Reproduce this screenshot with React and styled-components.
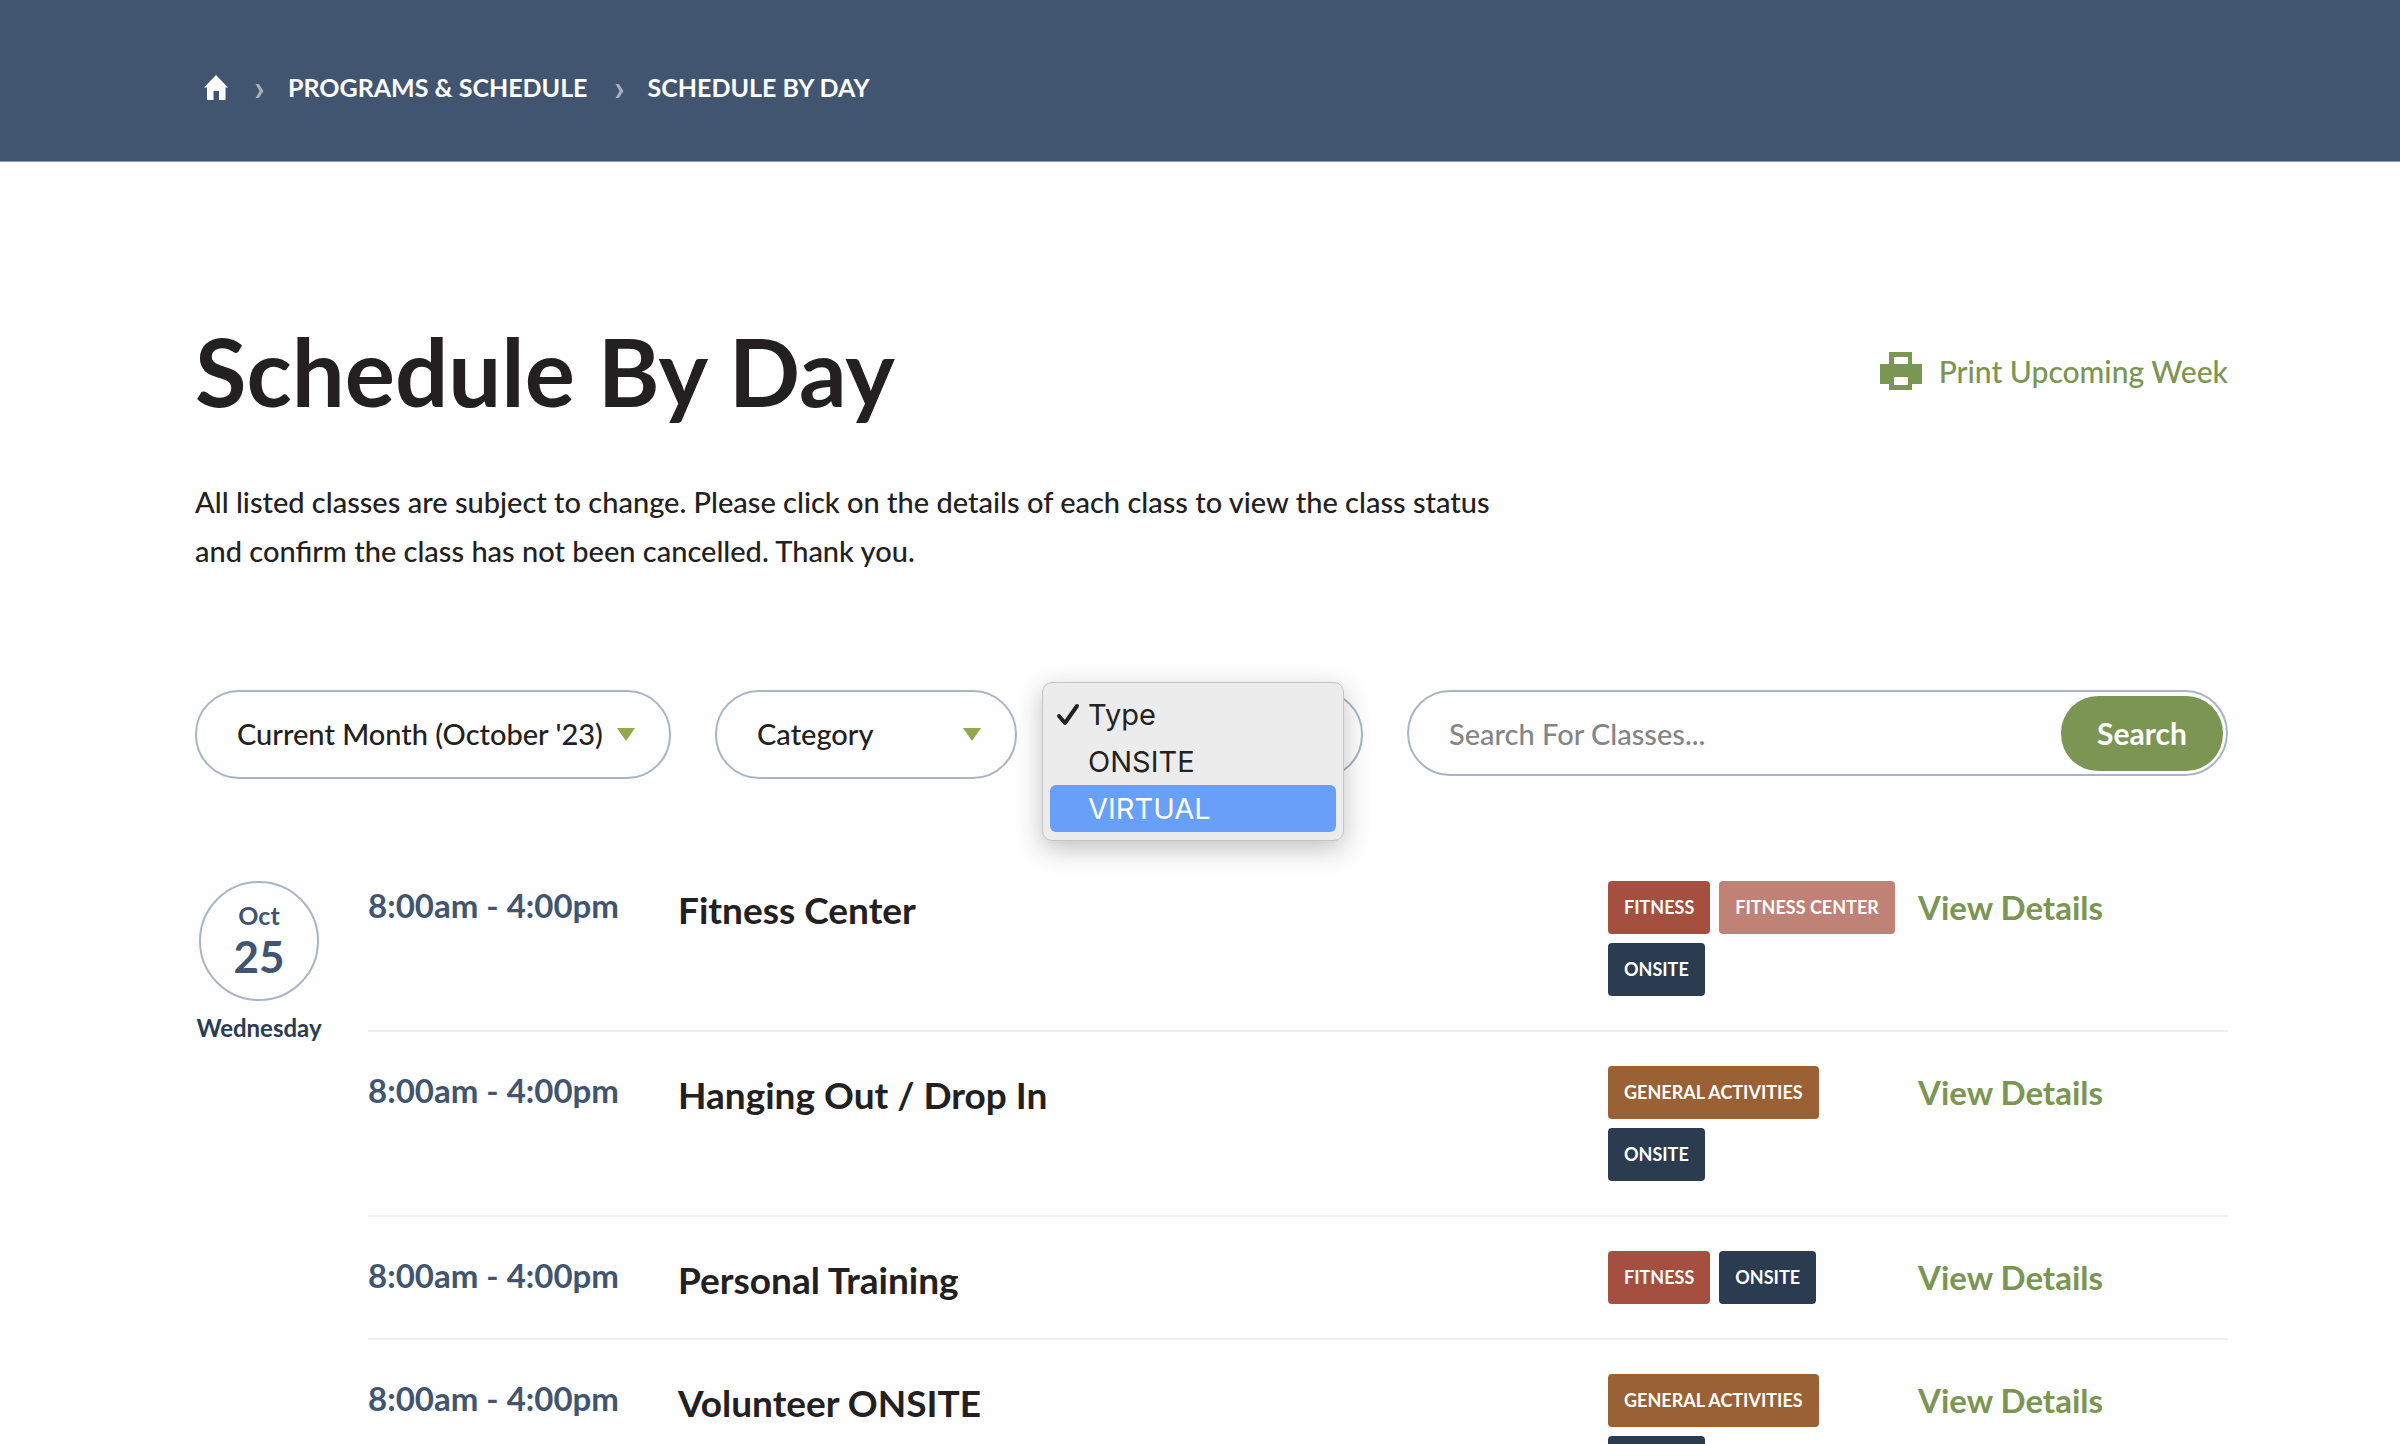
import React from "react";
import styled, { createGlobalStyle } from "styled-components";

const GlobalStyle = createGlobalStyle`
  * {
    box-sizing: border-box;
  }
  body {
    margin: 0;
    background: #fefefe;
    color: #222021;
    font-family: Lato, "Open Sans", sans-serif;
    font-size: 29px;
  }
`;

const TopBar = styled.header`
  background: #415571;
  border-bottom: 1px solid #8e9bb0;
  padding: 70px 172px 57px 204px;
`;

const Breadcrumb = styled.ol`
  display: flex;
  flex-wrap: wrap;
  list-style: none;
  margin: 0;
  padding: 0;
`;

const Crumb = styled.li`
  display: flex;
  align-items: center;
`;

const CrumbLink = styled.a`
  color: white;
  display: flex;
  font-size: 25px;
  font-weight: 700;
  line-height: 34px;
  text-decoration: none;
  text-transform: uppercase;
`;

const Chevron = styled.svg`
  width: 10px;
  height: 16px;
  margin: 8px 24px 0 26px;
`;

const Page = styled.main`
  padding: 157px 172px 0 195px;
`;

const TitleRow = styled.div`
  display: flex;
  align-items: center;
  justify-content: space-between;
`;

const Title = styled.h1`
  font-size: 94px;
  font-weight: 700;
  line-height: 104px;
  margin: 0;
`;

const PrintLink = styled.a`
  color: #7b9552;
  display: flex;
  align-items: center;
  gap: 17px;
  font-size: 30px;
  font-weight: 500;
  text-decoration: none;
`;

const Intro = styled.p`
  font-size: 29px;
  font-weight: 500;
  line-height: 49px;
  margin: 54px 0 0;
  max-width: 1340px;
`;

const Filters = styled.form`
  display: grid;
  grid-template-columns: 476px 302px 302px 1fr;
  align-items: start;
  gap: 44px;
  margin-top: 115px;

  @media (max-width: 1900px) {
    grid-template-columns: 1fr 1fr;
  }
`;

const Field = styled.div`
  position: relative;
`;

const Select = styled.select`
  appearance: none;
  background: transparent;
  border: 2px solid #a9b5c6;
  border-radius: 44px;
  color: ${(props) => (props.$open ? "transparent" : "#222021")};
  font-family: inherit;
  font-size: 29px;
  font-weight: 500;
  height: 89px;
  padding: 0 56px 2px 40px;
  width: 100%;
`;

const Arrow = styled.svg`
  position: absolute;
  right: 36px;
  top: 38px;
  width: 18px;
  height: 13px;
  pointer-events: none;
`;

const Menu = styled.ul`
  position: absolute;
  left: -19px;
  top: -8px;
  width: 302px;
  list-style: none;
  margin: 0;
  padding: 8px 7px;
  background: #ececec;
  border: 1px solid #c4c4c4;
  border-radius: 10px;
  box-shadow: 0 8px 26px rgba(0, 0, 0, 0.24);
  font-family: Inter, Roboto, sans-serif;
`;

const MenuItem = styled.li`
  display: flex;
  align-items: center;
  background: ${(props) => (props.$active ? "#689ff8" : "transparent")};
  border-radius: 6px;
  color: ${(props) => (props.$active ? "white" : "#222222")};
  font-size: 29px;
  line-height: 47px;
`;

const Mark = styled.span`
  display: flex;
  width: 38px;
  padding-left: 6px;
`;

const SearchBox = styled.div`
  display: flex;
  align-items: center;
  border: 2px solid #a9b5c6;
  border-radius: 43px;
  height: 86px;
  padding: 0 3px 0 40px;
`;

const SearchInput = styled.input`
  background: none;
  border: none;
  flex: 1;
  font-family: inherit;
  font-size: 29px;
  font-weight: 500;
  min-width: 0;
  padding: 0;

  &::placeholder {
    color: #858585;
    opacity: 1;
  }
`;

const SearchButton = styled.button`
  background: #7b9552;
  border: none;
  border-radius: 37px;
  color: white;
  font-family: inherit;
  font-size: 30px;
  font-weight: 700;
  height: 75px;
  padding: 0;
  width: 162px;
`;

const Day = styled.section`
  display: grid;
  grid-template-columns: 128px 1fr;
  column-gap: 45px;
  margin-top: 102px;
`;

const DateColumn = styled.div`
  color: #2c3c50;
  font-size: 24px;
  font-weight: 700;
  display: flex;
  flex-direction: column;
  align-items: center;
  gap: 12px;
`;

const DateCircle = styled.div`
  border: 2px solid #a9b5c6;
  border-radius: 50%;
  color: #415571;
  display: flex;
  flex-direction: column;
  align-items: center;
  height: 120px;
  padding-top: 16px;
  width: 120px;
`;

const Month = styled.span`
  font-size: 25px;
  line-height: 32px;
`;

const DayNumber = styled.span`
  font-size: 44px;
  line-height: 50px;
`;

const Events = styled.ul`
  list-style: none;
  margin: 0;
  padding: 0;
`;

const Row = styled.li`
  display: grid;
  grid-template-columns:
    minmax(0, 1fr) minmax(0, 3fr)
    minmax(0, 1fr) minmax(0, 1fr);
  align-items: start;
  border-bottom: 2px solid #efefef;
  margin-bottom: 34px;
  padding-bottom: 34px;
`;

const Time = styled.span`
  color: #415571;
  font-size: 33px;
  font-weight: 700;
  line-height: 48px;
`;

const EventName = styled.h2`
  font-size: 37px;
  font-weight: 700;
  line-height: 53px;
  margin: 0;
  padding-top: 2px;
  margin-bottom: -2px;
`;

const Tags = styled.div`
  display: flex;
  flex-wrap: wrap;
  gap: 9px;
`;

const Tag = styled.span`
  background: ${(props) => props.$color};
  border-radius: 4px;
  color: white;
  font-size: 18px;
  font-weight: 700;
  line-height: 53px;
  padding: 0 16px;
  text-transform: uppercase;
`;

const DetailsLink = styled.a`
  color: #7b9552;
  font-size: 33px;
  font-weight: 700;
  line-height: 53px;
  text-decoration: none;
`;

const TAG_COLORS = {
  Fitness: "#a44f3f",
  "Fitness Center": "#c08277",
  "General Activities": "#9a6135",
  Onsite: "#2c3c50",
};

const EVENTS = [
  { name: "Fitness Center", tags: ["Fitness", "Fitness Center", "Onsite"] },
  { name: "Hanging Out / Drop In", tags: ["General Activities", "Onsite"] },
  { name: "Personal Training", tags: ["Fitness", "Onsite"] },
  { name: "Volunteer ONSITE", tags: ["General Activities", "Onsite"] },
];

const Separator = () => (
  <Chevron viewBox="0 0 10 16" aria-hidden="true">
    <path
      d="M1.5 1 L5 1 L9.5 8 L5 15 L1.5 15 L5.5 8 Z"
      fill="#a3aebd"
    />
  </Chevron>
);

const DownArrow = () => (
  <Arrow viewBox="0 0 18 13" aria-hidden="true">
    <path d="M0 0 H18 L9 13 Z" fill="#93a84b" />
  </Arrow>
);

const App = () => {
  return (
    <>
      <GlobalStyle />
      <TopBar>
        <nav aria-label="Breadcrumb">
          <Breadcrumb>
            <Crumb>
              <CrumbLink href="#home" aria-label="Home">
                <svg width="24" height="25" viewBox="0 0 24 25" fill="white">
                  <path d="M12 0 L24 12.5 H21.5 V25 H15 V16 H9.5 V25 H3 V12.5 H0 Z" />
                </svg>
              </CrumbLink>
            </Crumb>
            <Crumb>
              <Separator />
              <CrumbLink href="#programs">Programs &amp; Schedule</CrumbLink>
            </Crumb>
            <Crumb>
              <Separator />
              <CrumbLink href="#day">Schedule By Day</CrumbLink>
            </Crumb>
          </Breadcrumb>
        </nav>
      </TopBar>

      <Page>
        <TitleRow>
          <Title>Schedule By Day</Title>
          <PrintLink href="#print">
            <svg width="42" height="38" viewBox="0 0 42 38" aria-hidden="true">
              <path
                fill="#7b9552"
                fillRule="evenodd"
                d="M9 0 H32 V12 H42 V32 H32 V38 H9 V32 H0 V12 H9 Z M14 5 V12 H28 V5 Z M14 25 V33 H28 V25 Z"
              />
            </svg>
            Print Upcoming Week
          </PrintLink>
        </TitleRow>
        <Intro>
          All listed classes are subject to change. Please click on the details
          of each class to view the class status and confirm the class has not
          been cancelled. Thank you.
        </Intro>

        <Filters onSubmit={(e) => e.preventDefault()}>
          <Field>
            <Select aria-label="Month">
              <option>Current Month (October '23)</option>
            </Select>
            <DownArrow />
          </Field>
          <Field>
            <Select aria-label="Category">
              <option>Category</option>
            </Select>
            <DownArrow />
          </Field>
          <Field>
            <Select aria-label="Type" $open>
              <option aria-label="Type" />
              <option aria-label="ONSITE" />
              <option aria-label="VIRTUAL" />
            </Select>
            <Menu role="listbox" aria-label="Type">
              <MenuItem role="option" aria-selected="true">
                <Mark>
                  <svg width="24" height="24" viewBox="0 0 24 24">
                    <path
                      d="M3 13 L9 20 L21 3"
                      fill="none"
                      stroke="#222222"
                      strokeWidth="4"
                      strokeLinecap="round"
                      strokeLinejoin="round"
                    />
                  </svg>
                </Mark>
                Type
              </MenuItem>
              <MenuItem role="option" aria-selected="false">
                <Mark />
                ONSITE
              </MenuItem>
              <MenuItem role="option" aria-selected="false" $active>
                <Mark />
                VIRTUAL
              </MenuItem>
            </Menu>
          </Field>
          <SearchBox>
            <SearchInput
              type="text"
              aria-label="Search For Classes"
              placeholder="Search For Classes..."
            />
            <SearchButton type="submit">Search</SearchButton>
          </SearchBox>
        </Filters>

        <Day>
          <DateColumn>
            <DateCircle>
              <Month>Oct</Month>
              <DayNumber>25</DayNumber>
            </DateCircle>
            Wednesday
          </DateColumn>
          <Events>
            {EVENTS.map((event) => (
              <Row key={event.name}>
                <Time>8:00am - 4:00pm</Time>
                <EventName>{event.name}</EventName>
                <Tags>
                  {event.tags.map((tag) => (
                    <Tag key={tag} $color={TAG_COLORS[tag]}>
                      {tag}
                    </Tag>
                  ))}
                </Tags>
                <DetailsLink href="#details">View Details</DetailsLink>
              </Row>
            ))}
          </Events>
        </Day>
      </Page>
    </>
  );
};

export default App;
